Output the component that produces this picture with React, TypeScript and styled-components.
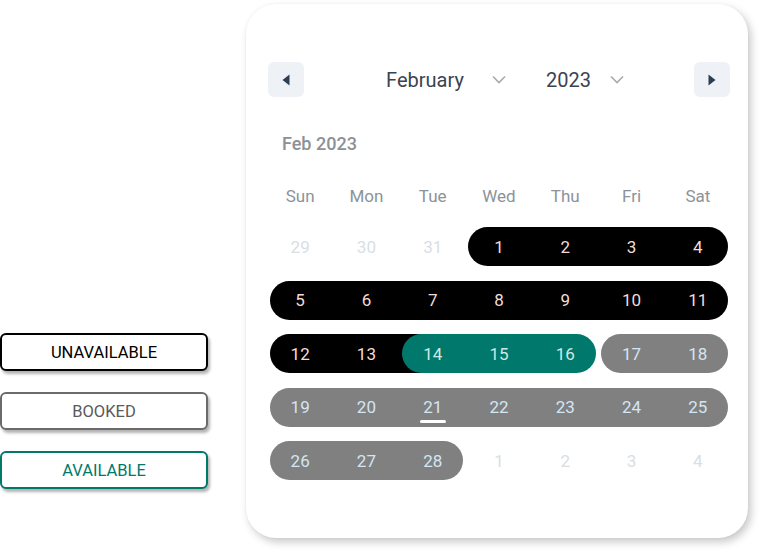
import styled, { createGlobalStyle, css } from "styled-components";

const GlobalStyle = createGlobalStyle`
  html, body {
    margin: 0;
    padding: 0;
    background: #fff;
  }
  body {
    font-family: Roboto, "Liberation Sans", Arial, sans-serif;
  }
`;

type Kind = "unavailable" | "booked" | "available";

const tones: Record<Kind, { bg: string; text: string; border: string; label: string }> = {
  unavailable: { bg: "#000000", text: "#f4dcd6", border: "#000000", label: "#000000" },
  booked: { bg: "#808080", text: "#d3e6f3", border: "#6b6b6b", label: "#5a5a5a" },
  available: { bg: "#00786c", text: "#cfe9e2", border: "#00796b", label: "#00796b" },
};

const Page = styled.main`
  width: 760px;
  height: 550px;
  display: flex;
  align-items: flex-end;
  padding-top: 4px;
  box-sizing: border-box;
`;

const Legend = styled.div`
  display: flex;
  flex-direction: column;
  gap: 21px;
  width: 208px;
  margin-bottom: 61px;
  margin-right: 38px;
`;

const LegendButton = styled.button<{ $kind: Kind }>`
  height: 38px;
  width: 208px;
  background: #fff;
  border: 2px solid ${(p) => tones[p.$kind].border};
  border-radius: 6px;
  box-shadow: 2px 3px 3px rgba(0, 0, 0, 0.3);
  color: ${(p) => tones[p.$kind].label};
  font-family: Roboto, "Liberation Sans", sans-serif;
  font-size: 16.5px;
  text-transform: uppercase;
  padding: 0;
`;

const Card = styled.section`
  align-self: flex-start;
  width: 502px;
  height: 534px;
  box-sizing: border-box;
  background: #fff;
  border-radius: 30px;
  box-shadow: 3px 4px 8px rgba(0, 0, 0, 0.22), 0 0 2px rgba(0, 0, 0, 0.05);
  padding: 58px 17px 0 21px;
`;

const NavRow = styled.div`
  display: flex;
  align-items: center;
  justify-content: space-between;
  height: 35px;
  padding: 0 1px;
`;

const NavButton = styled.button`
  width: 36px;
  height: 35px;
  border: none;
  border-radius: 6px;
  background: #eef1f6;
  display: flex;
  align-items: center;
  justify-content: center;
  padding: 0;
`;

const Selects = styled.div`
  display: flex;
  align-items: center;
  margin-left: 12px;
`;

const Select = styled.div<{ $gap: number; $after?: number }>`
  display: flex;
  align-items: center;
  gap: ${(p) => p.$gap}px;
  margin-right: ${(p) => p.$after ?? 0}px;
  font-family: Roboto, "Noto Sans", sans-serif;
  font-size: 20px;
  color: #3b4350;
`;

const MonthLabel = styled.div`
  margin-top: 35px;
  padding-left: 15px;
  height: 24px;
  line-height: 24px;
  font-size: 18px;
  font-weight: 500;
  color: #8a9296;
`;

const WeekHeader = styled.div`
  display: grid;
  grid-template-columns: repeat(7, 1fr);
  margin-top: 28px;
  height: 24px;
  line-height: 24px;
`;

const WeekDay = styled.div`
  text-align: center;
  font-size: 17px;
  color: #8b9399;
`;

const Weeks = styled.div`
  margin-top: 19px;
  display: flex;
  flex-direction: column;
  gap: 14.5px;
`;

const WeekRow = styled.div`
  display: grid;
  grid-template-columns: repeat(7, 1fr);
  grid-template-rows: 39px;
`;

const Band = styled.div<{ $kind: Kind; $start: number; $span: number; $left: boolean; $right: boolean }>`
  grid-row: 1;
  grid-column: ${(p) => p.$start} / span ${(p) => p.$span};
  background: ${(p) => tones[p.$kind].bg};
  ${(p) =>
    p.$left &&
    css`
      margin-left: 2.5px;
      border-top-left-radius: 19.5px;
      border-bottom-left-radius: 19.5px;
    `}
  ${(p) =>
    p.$right &&
    css`
      margin-right: 2.5px;
      border-top-right-radius: 19.5px;
      border-bottom-right-radius: 19.5px;
    `}
`;

const Day = styled.div<{ $col: number; $color: string }>`
  grid-row: 1;
  grid-column: ${(p) => p.$col};
  position: relative;
  z-index: 1;
  display: flex;
  align-items: center;
  justify-content: center;
  font-size: 17px;
  color: ${(p) => p.$color};
`;

const Today = styled.span`
  position: relative;
  &::after {
    content: "";
    position: absolute;
    left: -3px;
    right: -4px;
    bottom: -6px;
    height: 3px;
    border-radius: 2px;
    background: #fff;
  }
`;

function Chevron() {
  return (
    <svg width="14" height="9" viewBox="0 0 14 9">
      <path d="M1 1.5 L7 7.5 L13 1.5" fill="none" stroke="#a3aab1" strokeWidth="1.6" />
    </svg>
  );
}

function Triangle({ dir }: { dir: "left" | "right" }) {
  return (
    <svg width="8" height="12" viewBox="0 0 8 12">
      {dir === "left" ? (
        <path d="M7.5 0.5 L0.5 6 L7.5 11.5 Z" fill="#2c3e52" />
      ) : (
        <path d="M0.5 0.5 L7.5 6 L0.5 11.5 Z" fill="#2c3e52" />
      )}
    </svg>
  );
}

type BandDef = { kind: Kind; start: number; span: number; left?: boolean; right?: boolean };
type WeekDef = { days: { n: number; out?: boolean }[]; bands: BandDef[] };

const weeks: WeekDef[] = [
  {
    days: [{ n: 29, out: true }, { n: 30, out: true }, { n: 31, out: true }, { n: 1 }, { n: 2 }, { n: 3 }, { n: 4 }],
    bands: [{ kind: "unavailable", start: 4, span: 4, left: true, right: true }],
  },
  {
    days: [5, 6, 7, 8, 9, 10, 11].map((n) => ({ n })),
    bands: [{ kind: "unavailable", start: 1, span: 7, left: true, right: true }],
  },
  {
    days: [12, 13, 14, 15, 16, 17, 18].map((n) => ({ n })),
    bands: [
      { kind: "unavailable", start: 1, span: 3, left: true },
      { kind: "available", start: 3, span: 3, left: true, right: true },
      { kind: "booked", start: 6, span: 2, left: true, right: true },
    ],
  },
  {
    days: [19, 20, 21, 22, 23, 24, 25].map((n) => ({ n })),
    bands: [{ kind: "booked", start: 1, span: 7, left: true, right: true }],
  },
  {
    days: [{ n: 26 }, { n: 27 }, { n: 28 }, { n: 1, out: true }, { n: 2, out: true }, { n: 3, out: true }, { n: 4, out: true }],
    bands: [{ kind: "booked", start: 1, span: 3, left: true, right: true }],
  },
];

function dayColor(week: WeekDef, col: number, out?: boolean) {
  if (out) return "#d8dee4";
  let color = "#3b4350";
  week.bands.forEach((b) => {
    if (col >= b.start && col < b.start + b.span) color = tones[b.kind].text;
  });
  return color;
}

export default function App() {
  return (
    <>
      <GlobalStyle />
      <Page>
        <Legend>
          <LegendButton $kind="unavailable">Unavailable</LegendButton>
          <LegendButton $kind="booked">Booked</LegendButton>
          <LegendButton $kind="available">Available</LegendButton>
        </Legend>
        <Card>
          <NavRow>
            <NavButton aria-label="Previous month">
              <Triangle dir="left" />
            </NavButton>
            <Selects>
              <Select $gap={28} $after={40}>
                February
                <Chevron />
              </Select>
              <Select $gap={19}>
                2023
                <Chevron />
              </Select>
            </Selects>
            <NavButton aria-label="Next month">
              <Triangle dir="right" />
            </NavButton>
          </NavRow>
          <MonthLabel>Feb 2023</MonthLabel>
          <WeekHeader>
            {["Sun", "Mon", "Tue", "Wed", "Thu", "Fri", "Sat"].map((d) => (
              <WeekDay key={d}>{d}</WeekDay>
            ))}
          </WeekHeader>
          <Weeks>
            {weeks.map((week, wi) => (
              <WeekRow key={wi}>
                {week.bands.map((b, bi) => (
                  <Band key={bi} $kind={b.kind} $start={b.start} $span={b.span} $left={!!b.left} $right={!!b.right} />
                ))}
                {week.days.map((d, di) => (
                  <Day key={di} $col={di + 1} $color={dayColor(week, di + 1, d.out)}>
                    {wi === 3 && d.n === 21 ? <Today>{d.n}</Today> : d.n}
                  </Day>
                ))}
              </WeekRow>
            ))}
          </Weeks>
        </Card>
      </Page>
    </>
  );
}
